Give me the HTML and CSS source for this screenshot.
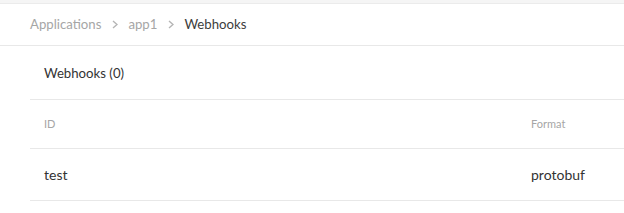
FILE: index.html
```html
<!DOCTYPE html>
<html lang="en">
<head>
    <meta charset="UTF-8">
    <title>Webhooks</title>
    <link rel="stylesheet" href="styles.css">
</head>
<body>
    <div class="topbar"></div>
    <div class="breadcrumb">
        <span class="crumb">Applications</span>
        <svg class="sep" width="6" height="9" viewBox="0 0 6 9"><polyline points="1,1 5,4.5 1,8" fill="none" stroke="#b5b5b5" stroke-width="1.4"/></svg>
        <span class="crumb">app1</span>
        <svg class="sep" width="6" height="9" viewBox="0 0 6 9"><polyline points="1,1 5,4.5 1,8" fill="none" stroke="#b5b5b5" stroke-width="1.4"/></svg>
        <span class="crumb current">Webhooks</span>
    </div>
    <div class="content">
        <div class="card">
            <div class="card-title">Webhooks (0)</div>
            <div class="row head">
                <div class="col-id">ID</div>
                <div class="col-format">Format</div>
            </div>
            <div class="row">
                <div class="col-id">test</div>
                <div class="col-format">protobuf</div>
            </div>
        </div>
    </div>
</body>
</html>
```

FILE: styles.css
```css
body {
    margin: 0;
    font-family: Lato, "Noto Sans", sans-serif;
    font-size: 14px;
    color: #333;
    background: #fff;
}
.topbar {
    height: 3px;
    background: #f5f5f5;
    border-bottom: 1px solid #ebebeb;
}
.breadcrumb {
    height: 39px;
    padding-bottom: 2px;
    display: flex;
    align-items: center;
    padding-left: 30px;
    border-bottom: 1px solid #e8e8e8;
    color: #a6a6a6;
    font-size: 13.2px;
}
.sep {
    margin: 2px 10px 0 11px;
}
.current {
    color: #3c3c3c;
}
.content {
    padding-left: 30px;
}
.card-title {
    height: 53px;
    display: flex;
    align-items: center;
    padding-left: 14px;
    font-size: 13.2px;
    border-bottom: 1px solid #e8e8e8;
}
.row {
    display: flex;
    align-items: center;
    height: 51px;
    padding-left: 14px;
    border-bottom: 1px solid #e8e8e8;
}
.row.head {
    height: 47px;
    padding-bottom: 1px;
    font-size: 11px;
    color: #a6a6a6;
}
.col-id {
    width: 487px;
}
```
